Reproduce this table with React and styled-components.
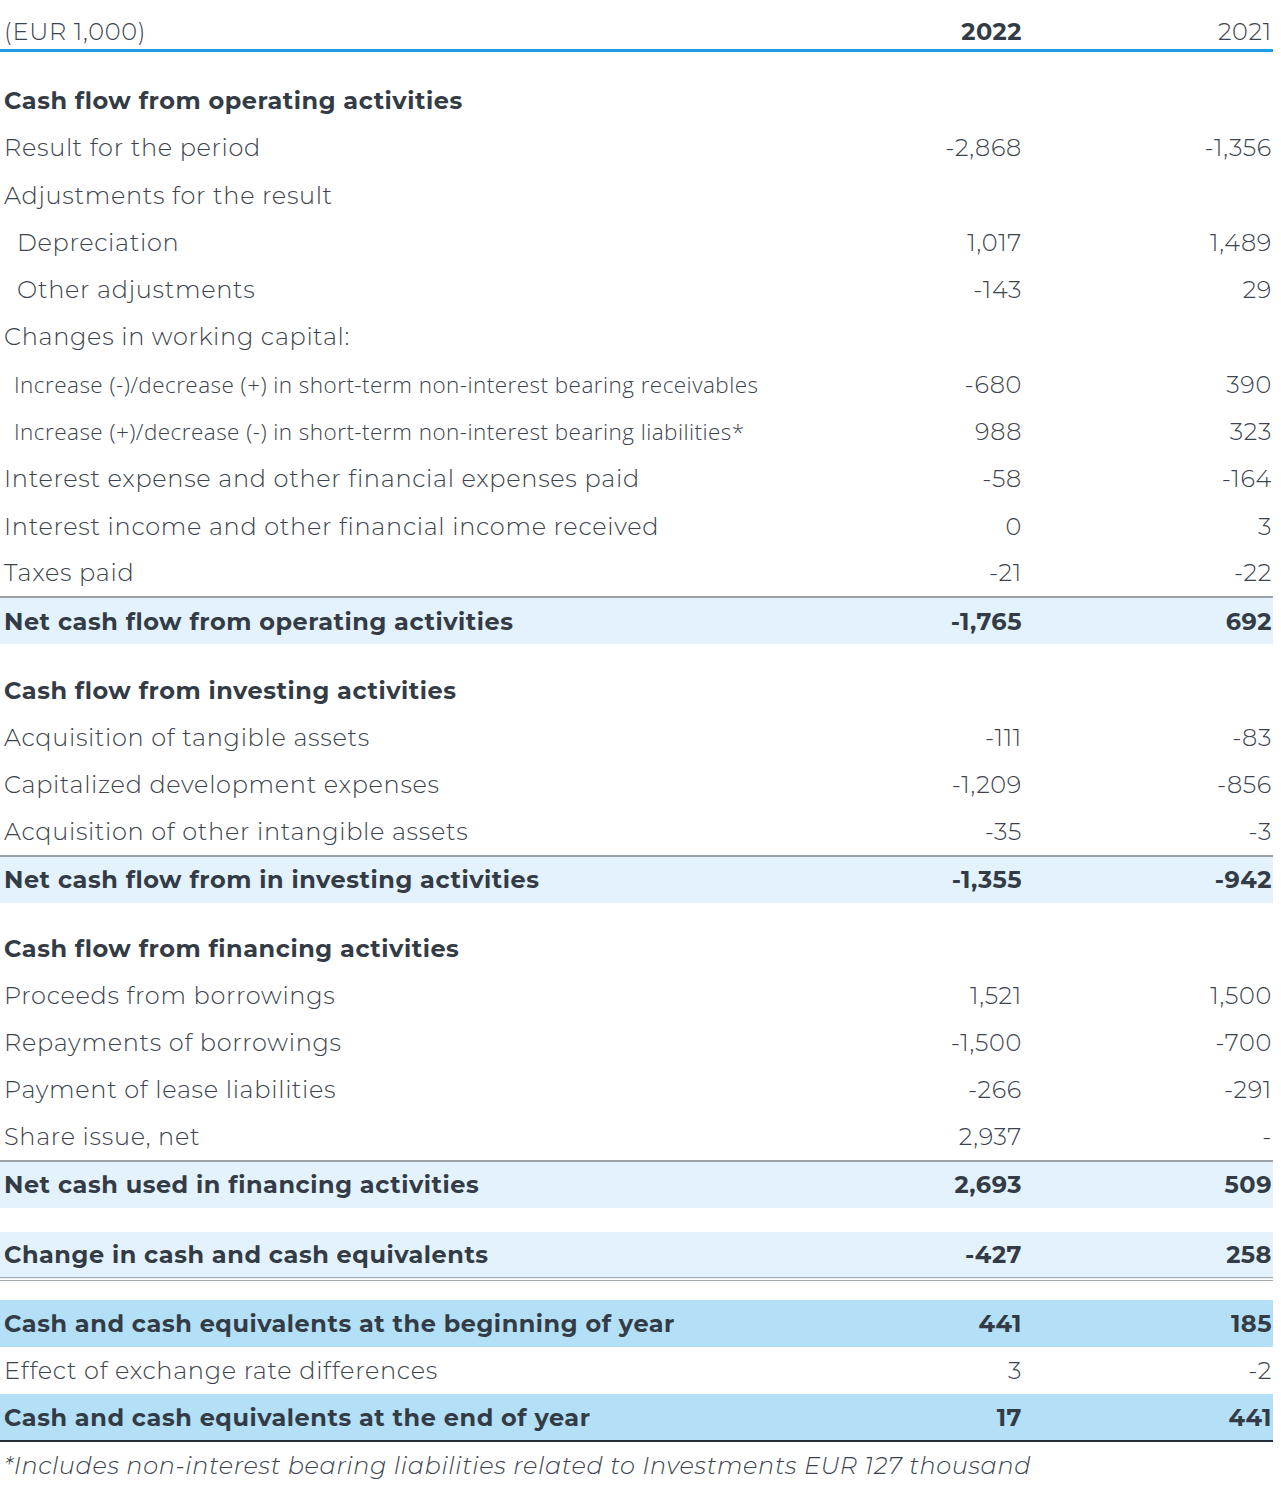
import React from 'react';
import styled, { createGlobalStyle } from 'styled-components';

const GlobalStyle = createGlobalStyle`
  html, body {
    margin: 0;
    padding: 0;
    background: #fff;
  }
  body {
    font-family: 'Montserrat', 'Open Sans', 'DejaVu Sans', sans-serif;
    color: #3b444e;
  }
`;

const ROW = 47.27;

const Page = styled.div`
  width: 1273px;
  padding-top: 2px;
`;

const Table = styled.table`
  width: 1273px;
  border-collapse: collapse;
  table-layout: fixed;
  font-size: 24px;
  font-weight: 300;
  letter-spacing: 0.7px;
`;

const Col = styled.col`
  width: ${({ $w }) => $w};
`;

const HeadCell = styled.th`
  height: 35px;
  padding: 12px 1px 0 4px;
  text-align: ${({ $right }) => ($right ? 'right' : 'left')};
  font-weight: ${({ $bold }) => ($bold ? 700 : 300)};
  letter-spacing: ${({ $bold }) => ($bold ? '0.53px' : '0.7px')};
  color: ${({ $bold }) => ($bold ? '#333c46' : '#3b444e')};
  border-bottom: 3px solid #1d9be3;
  vertical-align: middle;
`;

const Spacer = styled.tr`
  height: ${({ $h }) => $h}px;
`;

const Row = styled.tr`
  height: ${ROW}px;
  background: ${({ $tone }) =>
    $tone === 'strong' ? '#b3e0f7' : $tone === 'light' ? '#e3f2fc' : 'transparent'};
  border-top: ${({ $topLine }) => ($topLine ? '2px solid #9aa2a8' : 'none')};
  border-bottom: ${({ $bottom }) =>
    $bottom === 'double'
      ? '4px double #a4abb0'
      : $bottom === 'dark'
      ? '2px solid #262f38'
      : 'none'};
`;

const Label = styled.td`
  padding: 0 0 0 ${({ $indent }) => 4 + ($indent || 0)}px;
  white-space: nowrap;
  font-weight: ${({ $bold }) => ($bold ? 700 : 300)};
  color: ${({ $bold }) => ($bold ? '#333c46' : '#3b444e')};
  font-family: ${({ $small }) =>
    $small ? "'Open Sans', 'Liberation Sans', sans-serif" : 'inherit'};
  font-size: ${({ $small }) => ($small ? '22.5px' : 'inherit')};
  letter-spacing: ${({ $small, $bold }) =>
    $small ? '0.45px' : $bold ? '0.53px' : 'inherit'};
`;

const Value = styled.td`
  padding: 0 1px 0 0;
  text-align: right;
  white-space: nowrap;
  font-weight: ${({ $bold }) => ($bold ? 700 : 300)};
  letter-spacing: ${({ $bold }) => ($bold ? '0.53px' : 'inherit')};
  color: ${({ $bold }) => ($bold ? '#333c46' : '#3b444e')};
`;

const Footnote = styled.p`
  margin: 9px 0 0 4px;
  font-size: 24px;
  font-style: italic;
  font-weight: 300;
  letter-spacing: 0.65px;
  color: #3b444e;
`;

const sections = [
  {
    title: 'Cash flow from operating activities',
    gap: 26.5,
    rows: [
      ['Result for the period', '-2,868', '-1,356'],
      ['Adjustments for the result', '', ''],
      ['Depreciation', '1,017', '1,489', 13],
      ['Other adjustments', '-143', '29', 13],
      ['Changes in working capital:', '', ''],
      ['Increase (-)/decrease (+) in short-term non-interest bearing receivables', '-680', '390', 10, true],
      ['Increase (+)/decrease (-) in short-term non-interest bearing liabilities*', '988', '323', 10, true],
      ['Interest expense and other financial expenses paid', '-58', '-164'],
      ['Interest income and other financial income received', '0', '3'],
      ['Taxes paid', '-21', '-22'],
    ],
    total: ['Net cash flow from operating activities', '-1,765', '692'],
  },
  {
    title: 'Cash flow from investing activities',
    gap: 22.3,
    rows: [
      ['Acquisition of tangible assets', '-111', '-83'],
      ['Capitalized development expenses', '-1,209', '-856'],
      ['Acquisition of other intangible assets', '-35', '-3'],
    ],
    total: ['Net cash flow from in investing activities', '-1,355', '-942'],
  },
  {
    title: 'Cash flow from financing activities',
    gap: 21.7,
    rows: [
      ['Proceeds from borrowings', '1,521', '1,500'],
      ['Repayments of borrowings', '-1,500', '-700'],
      ['Payment of lease liabilities', '-266', '-291'],
      ['Share issue, net', '2,937', '-'],
    ],
    total: ['Net cash used in financing activities', '2,693', '509'],
  },
];

export default function App() {
  return (
    <Page>
      <GlobalStyle />
      <Table>
        <colgroup>
          <Col $w="773px" />
          <Col $w="250px" />
          <Col $w="250px" />
        </colgroup>
        <thead>
          <tr>
            <HeadCell>(EUR 1,000)</HeadCell>
            <HeadCell $right $bold>2022</HeadCell>
            <HeadCell $right>2021</HeadCell>
          </tr>
        </thead>
        <tbody>
          {sections.map((s) => (
            <React.Fragment key={s.title}>
              <Spacer $h={s.gap}><td colSpan={3} /></Spacer>
              <Row>
                <Label $bold>{s.title}</Label>
                <Value />
                <Value />
              </Row>
              {s.rows.map(([label, a, b, indent, small]) => (
                <Row key={label}>
                  <Label $indent={indent} $small={small}>{label}</Label>
                  <Value>{a}</Value>
                  <Value>{b}</Value>
                </Row>
              ))}
              <Row $tone="light" $topLine>
                <Label $bold>{s.total[0]}</Label>
                <Value $bold>{s.total[1]}</Value>
                <Value $bold>{s.total[2]}</Value>
              </Row>
            </React.Fragment>
          ))}
          <Spacer $h={23.5}><td colSpan={3} /></Spacer>
          <Row $tone="light" $bottom="double">
            <Label $bold>Change in cash and cash equivalents</Label>
            <Value $bold>-427</Value>
            <Value $bold>258</Value>
          </Row>
          <Spacer $h={20.7}><td colSpan={3} /></Spacer>
          <Row $tone="strong">
            <Label $bold>Cash and cash equivalents at the beginning of year</Label>
            <Value $bold>441</Value>
            <Value $bold>185</Value>
          </Row>
          <Row>
            <Label>Effect of exchange rate differences</Label>
            <Value>3</Value>
            <Value>-2</Value>
          </Row>
          <Row $tone="strong" $bottom="dark">
            <Label $bold>Cash and cash equivalents at the end of year</Label>
            <Value $bold>17</Value>
            <Value $bold>441</Value>
          </Row>
        </tbody>
      </Table>
      <Footnote>*Includes non-interest bearing liabilities related to Investments EUR 127 thousand</Footnote>
    </Page>
  );
}
